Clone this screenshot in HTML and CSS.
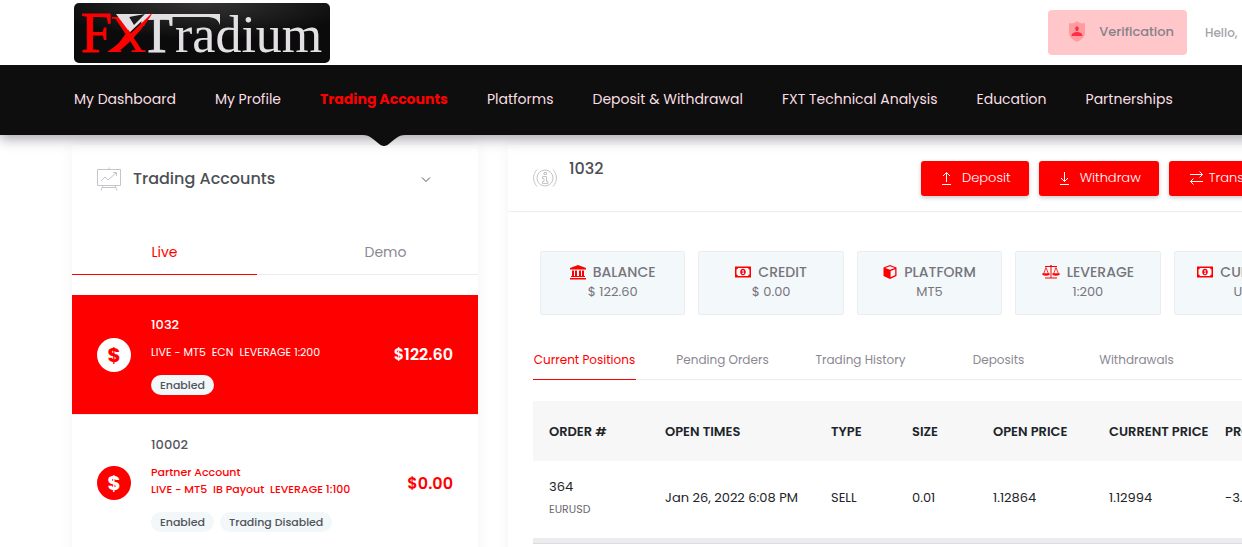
FILE: index.html
```html
<!DOCTYPE html>
<html lang="en">
<head>
  <meta charset="UTF-8">
  <title>FXTradium - Trading Accounts</title>
  <link rel="stylesheet" href="styles.css">
</head>
<body>

  <!-- shared icons -->
  <svg class="sprite" aria-hidden="true">
    <symbol id="icon-money" viewBox="0 0 16 12">
      <path fill-rule="evenodd" d="M0 .5h16v11H0zM3 2A2 2 0 0 1 1.500 3.500v5A2 2 0 0 1 3 10h10a2 2 0 0 1 1.500-1.500v-5A2 2 0 0 1 13 2z"/>
      <path fill-rule="evenodd" d="M8 2.800c1.700 0 2.800 1.400 2.800 3.200S9.700 9.200 8 9.200 5.200 7.800 5.200 6 6.300 2.800 8 2.800zM7 4.900l.3.500.4-.2v2H7v.7h2.200v-.7h-.6V4.100h-.7z"/>
    </symbol>
  </svg>

  <header class="header">
    <a href="#" class="logo" aria-label="FXTradium">
      <svg width="256" height="60" viewBox="0 0 256 60">
        <defs>
          <radialGradient id="logo-bg" cx="0.5" cy="0" r="0.6">
            <stop offset="0" stop-color="#363435"/>
            <stop offset="1" stop-color="#0b0b0b"/>
          </radialGradient>
        </defs>
        <rect width="256" height="60" rx="5" fill="url(#logo-bg)"/>
        <text class="logo-text" y="49" font-size="52"><tspan x="7" font-size="56" fill="#f00" stroke="#f00">F</tspan><tspan x="35" fill="#f00">X</tspan><tspan x="67" stroke="#e3e0e4">T</tspan><tspan x="101">radium</tspan></text>
        <!-- swoosh over the letters -->
        <path d="M43 11h103v11c-2-6-6-8-14-8H72L56 29z" fill="#e3e0e4"/>
        <path d="M55 14l5 8 11-11z" fill="#1c1b1c"/>
        <path d="M42 11h17l-4 3 4 7-5 6z" fill="#e3e0e4"/>
        <path d="M33 49C48 39 66 22 79 9 72 22 58 38 44 49z" fill="#f00"/>
      </svg>
    </a>
    <div class="header-right">
      <button class="verification" type="button">
        <svg width="16" height="22" viewBox="0 0 16 22">
          <path d="M0 2c3 1 6 0 8-2 2 2 5 3 8 2v10c0 4-4 7-8 9-4-2-8-5-8-9z" fill="#ff9a9f"/>
          <path d="M8 5l2 2-1 3H7L6 7zM2.500 15c0-3 3-4 5.500-4s5.500 1 5.500 4z" fill="#fd2e45"/>
        </svg>
        Verification
      </button>
      <span class="hello">Hello,</span>
    </div>
  </header>

  <nav class="nav">
    <a href="#">My Dashboard</a>
    <a href="#">My Profile</a>
    <a href="#" class="active">Trading Accounts
      <svg class="notch" width="42" height="12" viewBox="0 0 42 12"><path d="M0 0h42c-7 0-11 5-15 8-4 4-8 4-12 0C11 5 7 0 0 0z" fill="#0e0e0e"/></svg>
    </a>
    <a href="#">Platforms</a>
    <a href="#">Deposit &amp; Withdrawal</a>
    <a href="#">FXT Technical Analysis</a>
    <a href="#">Education</a>
    <a href="#">Partnerships</a>
  </nav>

  <main class="content">
    <section class="panel accounts">
      <div class="panel-head">
        <svg width="24" height="24" viewBox="0 0 24 24" class="line-icon">
          <path d="M.5 2.500h23v16H.5zM12 .5v2M6 18.500l-2 5M18 18.500l2 5M5.500 20.500h13M4 14l4-4 3 3 8-7M16 5.500h3.500V9"/>
        </svg>
        <h2>Trading Accounts</h2>
        <button class="toggle" type="button" aria-label="Collapse">
          <svg width="10" height="6" viewBox="0 0 10 6"><path d="M1 .5l4 4 4-4" fill="none" stroke="#555"/></svg>
        </button>
      </div>
      <div class="account-tabs">
        <a href="#" class="active">Live</a>
        <a href="#">Demo</a>
      </div>
      <div class="account selected">
        <span class="coin">$</span>
        <div class="account-info">
          <h3>1032</h3>
          <p>LIVE - MT5 &nbsp;ECN &nbsp;LEVERAGE 1:200</p>
          <div class="badges"><span class="badge">Enabled</span></div>
        </div>
        <strong class="amount">$122.60</strong>
      </div>
      <div class="account">
        <span class="coin">$</span>
        <div class="account-info">
          <h3>10002</h3>
          <p>Partner Account<br>LIVE - MT5 &nbsp;IB Payout &nbsp;LEVERAGE 1:100</p>
          <div class="badges"><span class="badge">Enabled</span><span class="badge">Trading Disabled</span></div>
        </div>
        <strong class="amount">$0.00</strong>
      </div>
    </section>

    <section class="panel details">
      <div class="panel-head">
        <svg width="24" height="20" viewBox="0 0 24 20" class="line-icon">
          <circle cx="12" cy="10" r="8"/>
          <path d="M4 1.500c-4.500 5-4.500 12 0 17M20 1.500c4.500 5 4.500 12 0 17M9.500 8.500h4v5h1.500v2H9.500v-2H11v-3H9.500zM11 4.500h2.500v2H11z"/>
        </svg>
        <h2 class="account-number">1032</h2>
        <div class="actions">
          <button type="button">
            <svg width="11" height="14" viewBox="0 0 11 14"><path d="M5.500 11V1.500M2 5l3.500-3.500L9 5M1 13.500h9"/></svg>
            Deposit
          </button>
          <button type="button">
            <svg width="11" height="14" viewBox="0 0 11 14"><path d="M5.500 1v9.500M2 7l3.500 3.500L9 7M1 13.500h9"/></svg>
            Withdraw
          </button>
          <button type="button" class="transfer">
            <svg width="15" height="14" viewBox="0 0 15 14"><path d="M1 3.500h12.500M10.500.5l3 3-3 3M14 10.500H1.500M4.500 7.500l-3 3 3 3"/></svg>
            Transfer
          </button>
        </div>
      </div>

      <div class="panel-body">
        <div class="stats">
          <div class="stat">
            <h4><svg width="16" height="15" viewBox="0 0 16 15"><path d="M8 0l8 3v1.500H0V3zM2 5.500h2V11h1V5.500h2V11h2V5.500h2V11h1V5.500h2V11h1v1H1v-1h1zM0 13h16v1.500H0z"/></svg>BALANCE</h4>
            <p>$ 122.60</p>
          </div>
          <div class="stat">
            <h4><svg width="16" height="12"><use href="#icon-money"/></svg>CREDIT</h4>
            <p>$ 0.00</p>
          </div>
          <div class="stat">
            <h4><svg width="14" height="14" viewBox="0 0 14 14"><path fill-rule="evenodd" d="M7 0l6.500 2.500v8.500L7 14 .5 11V2.500zM7 1.300L2.300 3 7 4.800 11.700 3zM7.600 6v6.200l4.600-2.100V4.200z"/></svg>PLATFORM</h4>
            <p>MT5</p>
          </div>
          <div class="stat">
            <h4><svg width="18" height="14" viewBox="0 0 18 14"><path d="M3 1h5a1 1 0 0 1 2 0h5v1H9.500v10.500H15v1H3v-1h5.500V2H3z"/><path d="M4 2.500L1.500 9h5zM14 2.500L11.500 9h5z" fill="none" stroke="#f00" stroke-width=".8"/><path d="M0 8.500h8c0 3-8 3-8 0zM10 8.500h8c0 3-8 3-8 0z"/></svg>LEVERAGE</h4>
            <p>1:200</p>
          </div>
          <div class="stat">
            <h4><svg width="16" height="12"><use href="#icon-money"/></svg>CURRENCY</h4>
            <p>USD</p>
          </div>
        </div>

        <div class="detail-tabs">
          <a href="#" class="active">Current Positions</a>
          <a href="#">Pending Orders</a>
          <a href="#">Trading History</a>
          <a href="#">Deposits</a>
          <a href="#">Withdrawals</a>
        </div>

        <table class="positions">
          <colgroup>
            <col class="col-order"><col class="col-time"><col class="col-short"><col class="col-short"><col class="col-price"><col class="col-price"><col>
          </colgroup>
          <thead>
            <tr><th>ORDER #</th><th>OPEN TIMES</th><th>TYPE</th><th>SIZE</th><th>OPEN PRICE</th><th>CURRENT PRICE</th><th>PROFIT</th></tr>
          </thead>
          <tbody>
            <tr><td>364<small>EURUSD</small></td><td>Jan 26, 2022 6:08 PM</td><td>SELL</td><td>0.01</td><td>1.12864</td><td>1.12994</td><td>-3.90</td></tr>
          </tbody>
        </table>
        <div class="scrollbar"></div>
      </div>
    </section>
  </main>

</body>
</html>
```

FILE: styles.css
```css
* {
  box-sizing: border-box;
}

html {
  overflow: hidden;
}

body {
  margin: 0;
  min-width: 1424px;
  background-color: #fff;
  color: #212529;
  font-family: Poppins, Inter, sans-serif;
  font-size: 13px;
}

h2, h3, h4, p {
  margin: 0;
  font-weight: 500;
}

a {
  color: inherit;
  text-decoration: none;
}

button {
  font-family: inherit;
  border: none;
  cursor: pointer;
}

.sprite {
  display: none;
}

/* header */
.header {
  position: relative;
  z-index: 2;
  display: flex;
  align-items: center;
  justify-content: space-between;
  height: 65px;
  padding: 0 74px;
  background-color: #fff;
}

.logo {
  display: flex;
}

.logo-text {
  font-family: "Liberation Serif", serif;
  fill: #e3e0e4;
}

.header-right {
  display: flex;
  align-items: center;
  gap: 18px;
  width: 302px;
}

.verification {
  display: flex;
  align-items: center;
  justify-content: flex-end;
  gap: 14px;
  width: 139px;
  height: 45px;
  padding: 0 13px 2px 0;
  border-radius: 4px;
  background-color: #ffc7c9;
  color: #858289;
  font-size: 13px;
  font-weight: 500;
}

.hello {
  color: #a5a2aa;
  font-size: 12px;
  font-weight: 500;
}

/* navigation */
.nav {
  position: relative;
  z-index: 1;
  display: flex;
  gap: 39px;
  height: 70px;
  padding: 0 74px;
  background-color: #0e0e0e;
  box-shadow: 0 4px 12px rgba(40, 30, 50, 0.4);
  color: #f8dfe3;
  font-size: 14px;
  line-height: 68px;
  white-space: nowrap;
}

.nav a {
  position: relative;
}

.nav .active {
  color: #f00;
  font-weight: 700;
}

.notch {
  position: absolute;
  top: 70px;
  left: 50%;
  margin-left: -21px;
}

/* panels */
.content {
  display: flex;
  align-items: flex-start;
  gap: 30px;
  padding: 10px 73px 0 72px;
}

.panel {
  min-height: 480px;
  background-color: #fff;
  box-shadow: 0 0 13px rgba(82, 63, 105, 0.06);
}

.accounts {
  flex: 0 0 406px;
}

.details {
  flex: 1;
  min-width: 0;
}

.panel-head {
  display: flex;
  align-items: center;
  gap: 12px;
  height: 67px;
  padding: 0 25px;
  color: #4d4f55;
}

.panel-head h2 {
  font-size: 16px;
}

.line-icon {
  fill: none;
  stroke: #c4c4ca;
}

.toggle {
  margin-left: auto;
  padding: 4px 22px;
  background: none;
}

.account-tabs {
  display: flex;
  justify-content: space-between;
  margin: 18px 0 20px;
  border-bottom: 1px solid #ebedf2;
  color: #8b8891;
  font-size: 14px;
  line-height: 44px;
  text-align: center;
}

.account-tabs a {
  width: 185px;
  margin-bottom: -1px;
  border-bottom: 1px solid transparent;
}

.account-tabs .active,
.detail-tabs .active {
  border-color: #f00;
  color: #f00;
}

.account {
  display: flex;
  align-items: center;
  padding: 19px 25px;
  border-top: 1px solid #ebedf2;
  color: #f00;
}

.account.selected {
  border-top: none;
  background-color: #f00;
  color: #fff;
}

.coin {
  width: 34px;
  margin-right: 20px;
  border-radius: 50%;
  background-color: #f00;
  color: #fff;
  font-size: 20px;
  font-weight: 700;
  line-height: 34px;
  text-align: center;
}

.selected .coin {
  background-color: #fff;
  color: #f00;
}

.account h3 {
  color: #55575d;
  font-size: 13px;
  line-height: 21px;
}

.account p {
  margin: 9px 0 14px;
  font-size: 11px;
  line-height: 17px;
}

.account.selected h3 {
  color: #fff;
}

.account.selected p {
  font-weight: 400;
}

.badges {
  display: flex;
  gap: 6px;
}

.badge {
  padding: 0 9px;
  border-radius: 10px;
  background-color: #f2f7fa;
  color: #505359;
  font-size: 11px;
  font-weight: 500;
  line-height: 20px;
}

.amount {
  margin-left: auto;
  font-size: 16px;
  font-weight: 600;
}

/* account details */
.details .panel-head {
  border-bottom: 1px solid #ebedf2;
}

.panel-head .account-number {
  align-self: flex-start;
  line-height: 48px;
}

.actions {
  display: flex;
  gap: 10px;
  width: 405px;
  margin-left: auto;
}

.actions button {
  display: flex;
  align-items: center;
  gap: 10px;
  height: 35px;
  padding: 0 18px 0 20px;
  border-radius: 3px;
  background-color: #f00;
  box-shadow: 0 2px 4px rgba(0, 0, 0, 0.2);
  color: #fff;
  font-size: 13px;
  font-weight: 300;
}

.actions .transfer {
  gap: 5px;
}

.actions svg {
  fill: none;
  stroke: #fff;
}

.panel-body {
  padding: 39px 25px 0;
}

.stats {
  display: grid;
  grid-template-columns: repeat(5, 1fr);
  gap: 13px;
  padding: 0 7px;
}

.stat {
  height: 64px;
  padding-top: 10px;
  border: 1px solid #ebedf2;
  border-radius: 2px;
  background-color: #f3f8fb;
  color: #77757c;
  text-align: center;
}

.stat h4 {
  display: flex;
  align-items: center;
  justify-content: center;
  gap: 7px;
  font-size: 14px;
  line-height: 20px;
}

.stat svg {
  fill: #f00;
}

.stat p {
  font-weight: 400;
  line-height: 20px;
}

.detail-tabs {
  display: grid;
  grid-template-columns: repeat(6, 1fr);
  gap: 35px;
  margin: 26px 0 21px;
  border-bottom: 1px solid #ebedf2;
  color: #8b8891;
  font-size: 12px;
  line-height: 38px;
  text-align: center;
  white-space: nowrap;
}

.detail-tabs a {
  margin-bottom: -1px;
  border-bottom: 1px solid transparent;
}

.positions {
  width: 100%;
  table-layout: fixed;
  border-collapse: collapse;
  white-space: nowrap;
}

.col-order,
.col-price {
  width: 116px;
}

.col-time {
  width: 166px;
}

.col-short {
  width: 81px;
}

.positions th,
.positions td {
  padding: 0 0 0 16px;
  text-align: left;
}

.positions th {
  height: 60px;
  padding-top: 2px;
  background-color: #f7f7f8;
  font-weight: 600;
}

.positions td {
  height: 77px;
  padding-bottom: 4px;
  line-height: 22px;
}

.positions small {
  display: block;
  color: #6c6a72;
  font-size: 11px;
}

.scrollbar {
  height: 6px;
  border-bottom: 1px solid #dcdde0;
  background-color: #ececee;
}
```
